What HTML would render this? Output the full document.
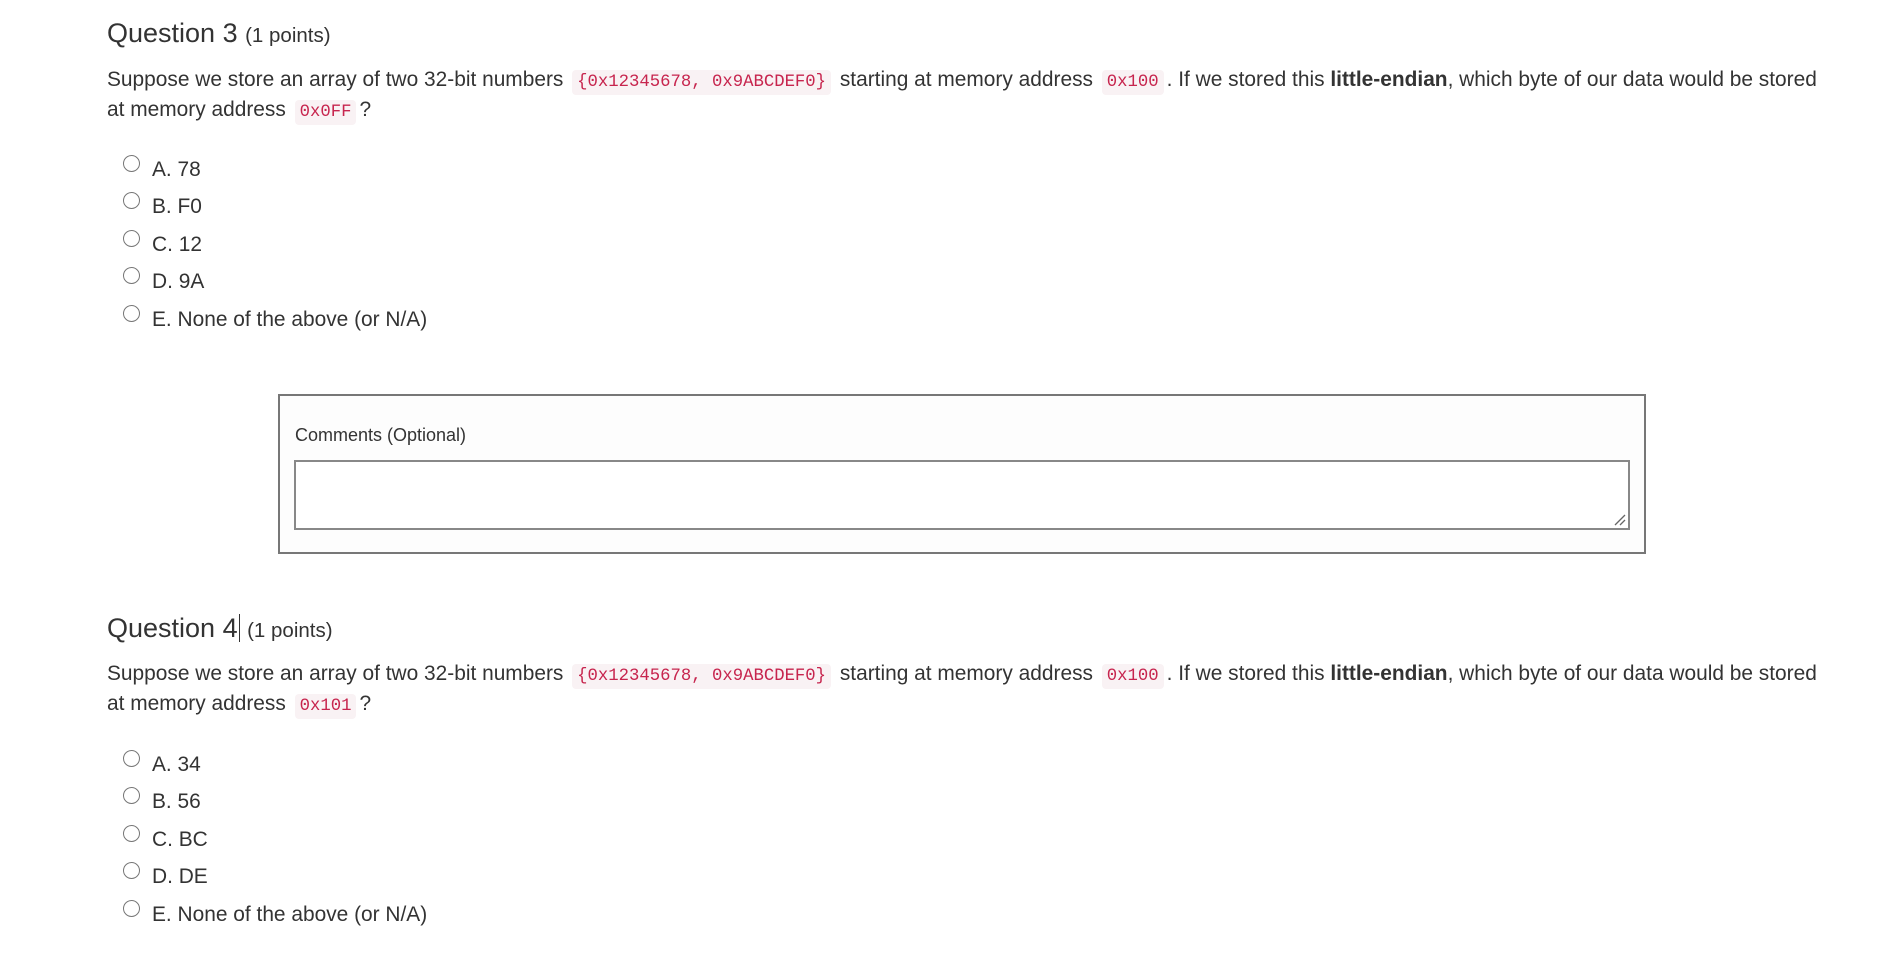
<!DOCTYPE html>
<html><head><meta charset="utf-8"><style>
body{margin:0;width:1896px;height:960px;background:#fff;font-family:"Liberation Sans",Arial,sans-serif;color:#333;position:relative;overflow:hidden}
.a{position:absolute;white-space:nowrap;line-height:1}
.h{font-size:27px;color:#333}
.h small{font-size:20.5px}
.t{font-size:20.9px}
code{font-family:"Liberation Mono",monospace;font-size:17.3px;color:#c7254e;background:#f9f2f4;border-radius:4px;padding:3px 5px;margin:0 3px}
.r{position:absolute;width:15px;height:15px;border:1px solid #767676;border-radius:50%;background:#fff}
.box{position:absolute;left:278px;top:394px;width:1368px;height:160px;border:2px solid #777;box-sizing:border-box;background:#fdfdfd}
.ta{position:absolute;left:294px;top:460px;width:1336px;height:70px;border:2px solid #888;box-sizing:border-box;background:#fff}
</style></head><body>
<div class="a h" style="left:107px;top:20px">Question 3 <small>(1 points)</small></div>
<div class="a t" style="left:107px;top:70px">Suppose we store an array of two 32-bit numbers <code>{0x12345678, 0x9ABCDEF0}</code> starting at memory address <code>0x100</code>. If we stored this <b>little-endian</b>, which byte of our data would be stored</div>
<div class="a t" style="left:107px;top:100px">at memory address <code>0x0FF</code>?</div>

<div class="r" style="left:123px;top:155px"></div><div class="a t" style="left:152px;top:160px">A. 78</div>
<div class="r" style="left:123px;top:192px"></div><div class="a t" style="left:152px;top:197px">B. F0</div>
<div class="r" style="left:123px;top:230px"></div><div class="a t" style="left:152px;top:235px">C. 12</div>
<div class="r" style="left:123px;top:267px"></div><div class="a t" style="left:152px;top:272px">D. 9A</div>
<div class="r" style="left:123px;top:305px"></div><div class="a t" style="left:152px;top:310px">E. None of the above (or N/A)</div>

<div class="box"></div>
<div class="a" style="left:295px;top:426px;font-size:18px;color:#333">Comments (Optional)</div>
<div class="ta"><svg style="position:absolute;right:2px;bottom:2px" width="12" height="12"><path d="M1 11L11 1M6 11L11 6" stroke="#666" stroke-width="1.3"/></svg></div>

<div class="a h" style="left:107px;top:614px">Question 4<span style="display:inline-block;width:1px;height:28px;background:#333;vertical-align:-5px;margin-left:1px"></span> <small>(1 points)</small></div>
<div class="a t" style="left:107px;top:664px">Suppose we store an array of two 32-bit numbers <code>{0x12345678, 0x9ABCDEF0}</code> starting at memory address <code>0x100</code>. If we stored this <b>little-endian</b>, which byte of our data would be stored</div>
<div class="a t" style="left:107px;top:694px">at memory address <code>0x101</code>?</div>

<div class="r" style="left:123px;top:750px"></div><div class="a t" style="left:152px;top:755px">A. 34</div>
<div class="r" style="left:123px;top:787px"></div><div class="a t" style="left:152px;top:792px">B. 56</div>
<div class="r" style="left:123px;top:825px"></div><div class="a t" style="left:152px;top:830px">C. BC</div>
<div class="r" style="left:123px;top:862px"></div><div class="a t" style="left:152px;top:867px">D. DE</div>
<div class="r" style="left:123px;top:900px"></div><div class="a t" style="left:152px;top:905px">E. None of the above (or N/A)</div>
</body></html>
